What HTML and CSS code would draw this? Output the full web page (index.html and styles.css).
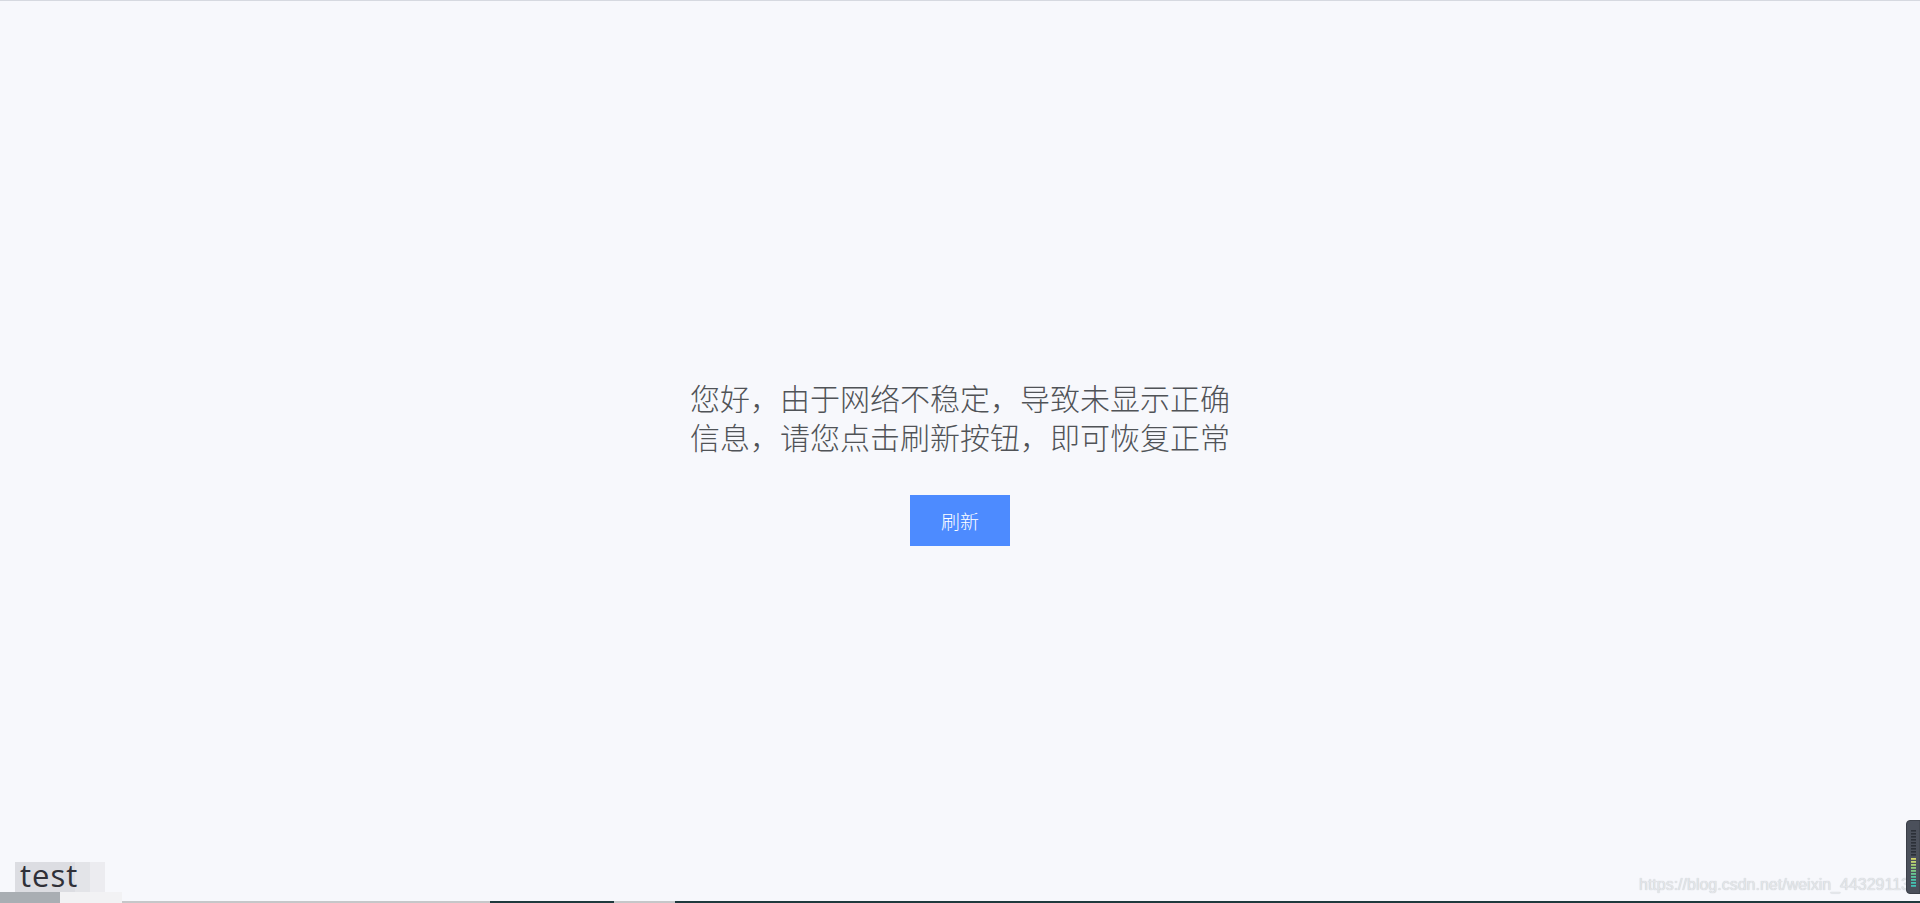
FILE: index.html
```html
<!DOCTYPE html>
<html lang="zh-CN">
<head>
<meta charset="utf-8">
<title>网络不稳定</title>
<link rel="stylesheet" href="styles.css">
</head>
<body>
<div class="page">
  <main class="main">
    <p class="message">您好，由于网络不稳定，导致未显示正确信息，请您点击刷新按钮，即可恢复正常</p>
    <button class="refresh" type="button">刷新</button>
  </main>
  <div class="tag-row">
    <div class="tag">test</div>
    <div class="tag-tail"></div>
  </div>
  <div class="footer">
    <div class="seg seg-grey"></div>
    <div class="seg seg-light"></div>
    <div class="seg seg-line-light"></div>
    <div class="seg seg-line-dark1"></div>
    <div class="seg seg-line-grey"></div>
    <div class="seg seg-line-dark2"></div>
  </div>
  <div class="watermark">https://blog.csdn.net/weixin_44329113</div>
  <div class="meter">
    <svg width="14" height="74" viewBox="0 0 14 74" xmlns="http://www.w3.org/2000/svg">
      <path d="M4 0.5 H14 V73.5 H4 A3.5 3.5 0 0 1 0.5 70 V4 A3.5 3.5 0 0 1 4 0.5 Z" fill="#4b505b" stroke="#3a3e47"/>
      <g fill="#2c3038">
        <rect x="5" y="10" width="5" height="1.6"/>
        <rect x="5" y="13" width="5" height="1.6"/>
        <rect x="5" y="16" width="5" height="1.6"/>
        <rect x="5" y="19" width="5" height="1.6"/>
        <rect x="5" y="22" width="5" height="1.6"/>
        <rect x="5" y="25" width="5" height="1.6"/>
        <rect x="5" y="28" width="5" height="1.6"/>
        <rect x="5" y="31" width="5" height="1.6"/>
        <rect x="5" y="34" width="5" height="1.6"/>
      </g>
      <rect x="5" y="38" width="5" height="1.8" fill="#d6d86a"/>
      <rect x="5" y="41" width="5" height="1.8" fill="#c3d66e"/>
      <rect x="5" y="44" width="5" height="1.8" fill="#aad274"/>
      <rect x="5" y="47" width="5" height="1.8" fill="#93cf7c"/>
      <rect x="5" y="50" width="5" height="1.8" fill="#7dcb86"/>
      <rect x="5" y="53" width="5" height="1.8" fill="#69c892"/>
      <rect x="5" y="56" width="5" height="1.8" fill="#58c69e"/>
      <rect x="5" y="59" width="5" height="1.8" fill="#4cc4a8"/>
      <rect x="5" y="62" width="5" height="1.8" fill="#44c2b0"/>
      <rect x="5" y="65" width="5" height="1.8" fill="#40c0b4"/>
    </svg>
  </div>
</div>
</body>
</html>
```

FILE: styles.css
```css
html, body {
  margin: 0;
  padding: 0;
}

body {
  background: #f7f8fc;
  font-family: "Noto Sans CJK SC", "Noto Sans", sans-serif;
  overflow: hidden;
}

.page {
  position: relative;
  height: 903px;
  box-sizing: border-box;
  border-top: 1px solid #d6d9e0;
  display: flex;
  flex-direction: column;
}

.main {
  flex: 1;
  display: flex;
  flex-direction: column;
  align-items: center;
  padding-top: 377px;
}

.message {
  margin: 0;
  width: 544px;
  font-size: 30px;
  font-weight: 300;
  line-height: 39px;
  color: #505357;
  text-align: center;
}

.refresh {
  margin-top: 39px;
  width: 100px;
  height: 51px;
  border: none;
  border-radius: 0;
  background: #4d8bff;
  color: #ffffff;
  font-family: "Noto Sans CJK SC", sans-serif;
  font-size: 19px;
  font-weight: 300;
  padding: 0;
  cursor: pointer;
}

.tag-row {
  height: 30px;
  display: flex;
  padding-left: 15px;
}

.tag {
  width: 75px;
  height: 30px;
  box-sizing: border-box;
  padding-left: 5px;
  padding-top: 1px;
  background: linear-gradient(90deg, #dcdde2 0, #dcdde2 60px, #e3e4e8 60px, #e3e4e8 75px);
  font-family: "Open Sans", sans-serif;
  font-size: 31px;
  line-height: 24px;
  letter-spacing: 1px;
  color: #2f3038;
}

.tag-tail {
  width: 15px;
  height: 30px;
  background: #ececf0;
}

.footer {
  height: 11px;
  display: flex;
  align-items: flex-end;
}

.seg {
  flex: none;
}

.seg-grey {
  width: 60px;
  height: 11px;
  background: #a9aeb3;
}

.seg-light {
  width: 62px;
  height: 11px;
  background: #f2f2f4;
}

.seg-line-light {
  width: 368px;
  height: 2px;
  background: #c6c7c9;
}

.seg-line-dark1 {
  width: 124px;
  height: 2px;
  background: #1f3a3d;
}

.seg-line-grey {
  width: 61px;
  height: 2px;
  background: #c6c7c9;
}

.seg-line-dark2 {
  flex: 1;
  height: 2px;
  background: #1f3a3d;
}

.watermark {
  position: absolute;
  right: 10px;
  bottom: 9px;
  font-family: "Liberation Sans", Arial, sans-serif;
  font-size: 16px;
  line-height: 18px;
  color: #e4e6ea;
  text-shadow: 0 0 1px #b9bdc3;
  white-space: nowrap;
}

.meter {
  position: absolute;
  right: 0;
  bottom: 9px;
  width: 14px;
  height: 74px;
  line-height: 0;
}
```
